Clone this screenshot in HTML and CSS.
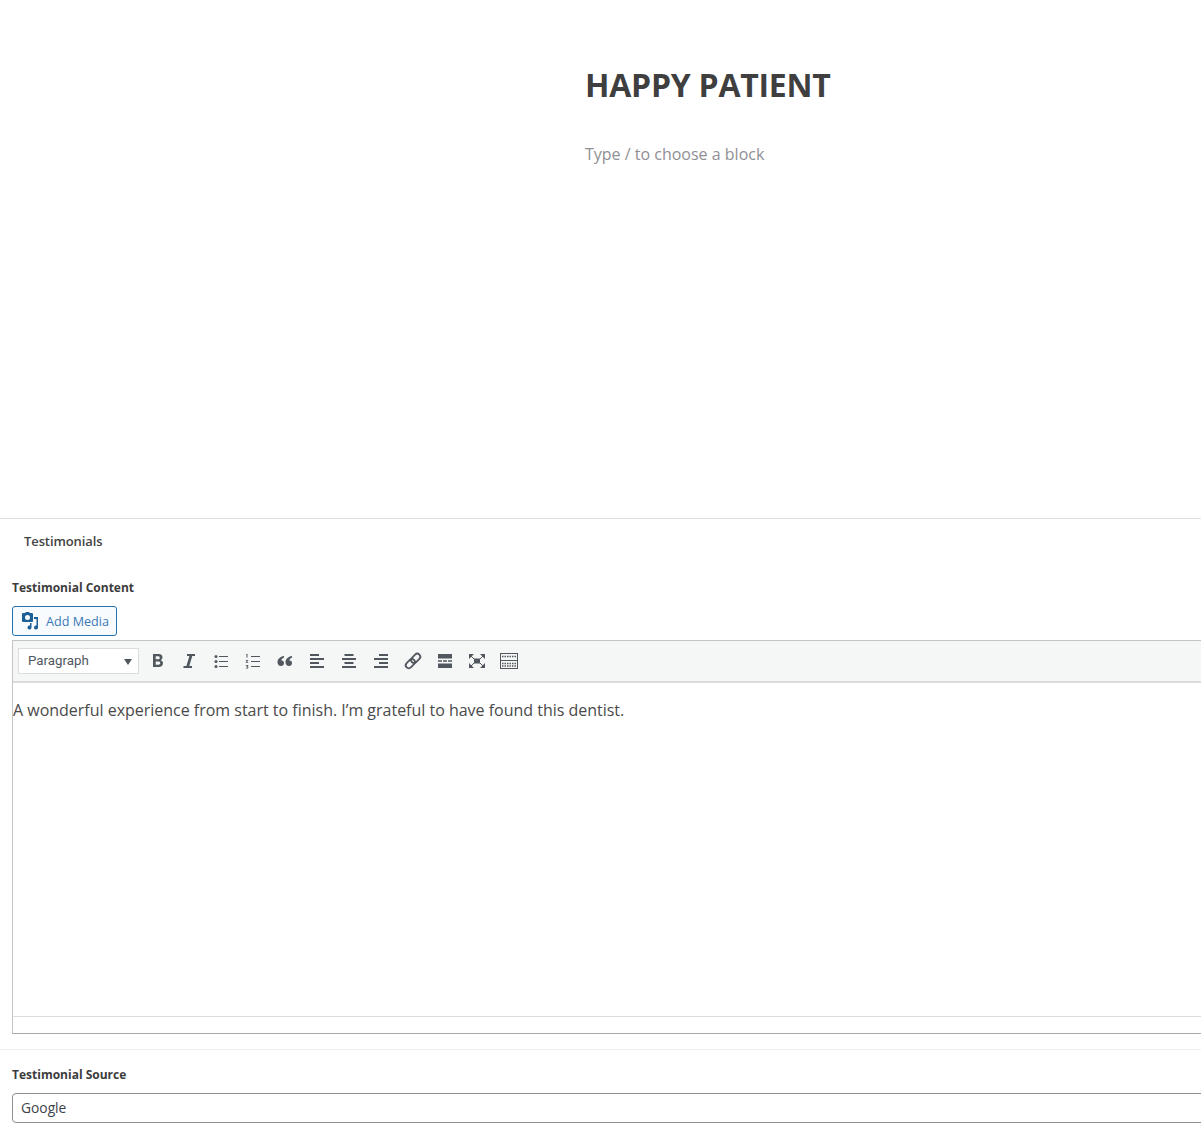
FILE: index.html
```html
<!DOCTYPE html>
<html lang="en">
<head>
    <meta charset="UTF-8">
    <title>Edit Testimonial</title>
    <link rel="stylesheet" href="styles.css">
</head>
<body>
    <div class="editor-canvas">
        <h1 class="post-title">HAPPY PATIENT</h1>
        <p class="block-hint">Type / to choose a block</p>
    </div>

    <div class="metabox">
        <h2 class="metabox-title">Testimonials</h2>

        <div class="field field-content">
            <label class="field-label">Testimonial Content</label>
            <button class="media-btn">
                <svg class="media-icon" width="18" height="18" viewBox="0 0 18 18">
                    <path fill="#1d5f97" fill-rule="evenodd" d="M2 1h2l1-1h3l1 1h2a1 1 0 0 1 1 1v7a1 1 0 0 1-1 1H2a1 1 0 0 1-1-1V2a1 1 0 0 1 1-1zm4.500 2a2.500 2.500 0 1 0 0 5 2.500 2.500 0 0 0 0-5z"/>
                    <path fill="#1d5f97" d="M13 5h4v10.500a2 2 0 1 1-1.500-1.900V7h-2.500zM10.500 11v4.500a2 2 0 1 1-1.500-1.900V11z"/>
                </svg>
                Add Media
            </button>

            <div class="wp-editor">
                <div class="toolbar">
                    <div class="format-select">Paragraph<span class="caret"></span></div>
                    <button class="tool"><svg viewBox="0 0 20 20"><path fill-rule="evenodd" d="M6 3h5.500c2.500 0 4 1.200 4 3.300 0 1.400-.7 2.400-1.900 2.900 1.500.4 2.400 1.500 2.400 3.100 0 2.400-1.700 3.700-4.500 3.700H6zm2.700 2.200v3.100h2.300c1.200 0 1.800-.5 1.800-1.600 0-1-.6-1.500-1.800-1.500zm0 5.200v3.400h2.600c1.300 0 2-.6 2-1.700s-.7-1.700-2-1.700z"/></svg></button>
                    <button class="tool"><svg viewBox="0 0 20 20"><path d="M8 3h8v2h-2.700l-3 10H13v2H4.500v-2h2.900l3-10H8z"/></svg></button>
                    <button class="tool"><svg viewBox="0 0 20 20"><circle cx="5" cy="5.500" r="1.500"/><circle cx="5" cy="10.500" r="1.500"/><circle cx="5" cy="15.500" r="1.500"/><path d="M8 5h9v1H8zM8 10h9v1H8zM8 15h9v1H8z"/></svg></button>
                    <button class="tool"><svg viewBox="0 0 20 20"><path d="M3.500 3h1v3.500h-1V4H3zM2.800 9h2.400v.8L3.900 11h1.300v.8H2.800V11l1.400-1.200H2.800zM2.800 14h2.400v3.500H2.800v-.7h1.500v-.7H3.200v-.6h1.100v-.7H2.800z"/><path d="M8 5h9v1H8zM8 10h9v1H8zM8 15h9v1H8z"/></svg></button>
                    <button class="tool"><svg viewBox="0 0 20 20"><path d="M9 5v1.500C7.300 7.300 6.500 8.300 6.300 9.500 8 9.300 9 10.300 9 12c0 1.700-1.200 3-3 3-2 0-3.500-1.500-3.500-4C2.500 8 5 5.700 9 5zM17 5v1.500c-1.700.8-2.500 1.800-2.700 3 1.700-.2 2.700.8 2.700 2.500 0 1.700-1.200 3-3 3-2 0-3.500-1.500-3.500-4 0-3 2.500-5.300 6.500-6z"/></svg></button>
                    <button class="tool"><svg viewBox="0 0 20 20"><path d="M3 3h9v2H3zM3 7h14v2H3zM3 11h9v2H3zM3 15h14v2H3z"/></svg></button>
                    <button class="tool"><svg viewBox="0 0 20 20"><path d="M5.500 3h9v2h-9zM3 7h14v2H3zM5.500 11h9v2h-9zM3 15h14v2H3z"/></svg></button>
                    <button class="tool"><svg viewBox="0 0 20 20"><path d="M8 3h9v2H8zM3 7h14v2H3zM8 11h9v2H8zM3 15h14v2H3z"/></svg></button>
                    <button class="tool"><svg viewBox="0 0 20 20"><g fill="none" stroke="#50575e" stroke-width="1.800" transform="rotate(-45 10 10)"><rect x="1" y="7" width="10.500" height="6" rx="3"/><rect x="8.500" y="7" width="10.500" height="6" rx="3"/></g></svg></button>
                    <button class="tool"><svg viewBox="0 0 20 20"><path d="M3 3h14v4.500H3zM3 12.500h14V17H3zM3 9.200h4v1.600H3zM8 9.200h4v1.600H8zM13 9.200h4v1.600h-4z"/></svg></button>
                    <button class="tool"><svg viewBox="0 0 20 20"><path d="M2 3h5L2 8zM18 3v5l-5-5zM2 17v-5l5 5zM18 17h-5l5-5zM7 7.500h6v5H7z"/><path class="fs-line" d="M4 5l4 4M16 5l-4 4M4 15l4-4M16 15l-4-4"/></svg></button>
                    <button class="tool"><svg viewBox="0 0 20 20"><path fill-rule="evenodd" d="M1 2h18v16H1zm1 1v6h16V3zm0 7v7h16v-7z"/><path class="key-row" d="M3 5.500h14M3 12.500h14M3 15h14"/></svg></button>
                </div>
                <div class="editor-body">A wonderful experience from start to finish. I’m grateful to have found this dentist.</div>
                <div class="status-bar"></div>
            </div>
        </div>

        <div class="field field-source">
            <label class="field-label">Testimonial Source</label>
            <input class="text-input" type="text" value="Google">
        </div>
    </div>
</body>
</html>
```

FILE: styles.css
```css
html, body {
    margin: 0;
    padding: 0;
    overflow: hidden;
}

body {
    width: 1240px;
    height: 1138px;
    background: #fff;
    font-family: "Open Sans", "Noto Sans", sans-serif;
    color: #3c434a;
}

.editor-canvas {
    height: 518px;
    padding-left: 585px;
    box-sizing: border-box;
    overflow: hidden;
}

.post-title {
    margin: 63px 0 0;
    font-size: 32px;
    line-height: 43px;
    font-weight: 700;
    letter-spacing: -0.25px;
    color: #3f3f3f;
}

.block-hint {
    margin: 37px 0 0;
    font-size: 16px;
    line-height: 22px;
    color: #8f8f94;
}

.metabox {
    border-top: 1px solid #e0e0e0;
}

.metabox-title {
    margin: 0;
    padding: 13px 24px 0;
    font-size: 13px;
    line-height: 18px;
    font-weight: 600;
    letter-spacing: -0.1px;
    color: #444;
}

.field {
    padding: 0 0 0 12px;
}

.field-content {
    padding-top: 29px;
    padding-bottom: 15px;
    border-bottom: 1px solid #eee;
}

.field-label {
    display: block;
    font-size: 12px;
    line-height: 18px;
    font-weight: 700;
    color: #3c3c3c;
}

.media-btn {
    display: flex;
    align-items: center;
    gap: 7px;
    height: 30px;
    width: 105px;
    margin-top: 9px;
    padding: 0 0 0 8px;
    box-sizing: border-box;
    background: #f8fbfd;
    border: 1px solid #2271b1;
    border-radius: 3px;
    font-family: inherit;
    font-size: 12.6px;
    color: #3a78b8;
}

.wp-editor {
    margin-top: 4px;
    height: 394px;
    box-sizing: border-box;
    border: 1px solid #c3c4c7;
    border-bottom-color: #a7aaad;
    border-right: 0;
    display: flex;
    flex-direction: column;
}

.toolbar {
    display: flex;
    align-items: center;
    height: 40px;
    padding-left: 5px;
    background: #f5f6f6;
    border-bottom: 2px solid #dcdcde;
    flex: none;
}

.format-select {
    position: relative;
    width: 121px;
    height: 26px;
    box-sizing: border-box;
    margin-right: 2px;
    padding-left: 9px;
    background: #fff;
    border: 1px solid #dcdcde;
    font-family: "Roboto", "Liberation Sans", sans-serif;
    font-size: 13.3px;
    line-height: 23px;
    color: #50575e;
}

.caret {
    position: absolute;
    right: 6px;
    top: 10px;
    border: 4px solid transparent;
    border-top: 6px solid #50575e;
    border-bottom: 0;
}

.tool {
    width: 32px;
    height: 30px;
    padding: 0 6px;
    box-sizing: border-box;
    background: none;
    border: 0;
    display: flex;
    align-items: center;
    justify-content: center;
}

.tool svg {
    width: 20px;
    height: 20px;
    fill: #50575e;
    flex: none;
}

.tool .key-row {
    fill: none;
    stroke: #50575e;
    stroke-width: 1.5;
    stroke-dasharray: 1.5 1;
}

.tool .fs-line {
    fill: none;
    stroke: #50575e;
    stroke-width: 1;
}

.editor-body {
    flex: 1;
    padding-top: 16px;
    font-size: 16px;
    line-height: 22px;
    letter-spacing: -0.012px;
    color: #4a4a4a;
}

.status-bar {
    height: 16px;
    border-top: 1px solid #dcdcde;
    flex: none;
}

.field-source {
    padding-top: 16px;
}

.text-input {
    display: block;
    width: 100%;
    height: 30px;
    margin-top: 9px;
    padding: 0 8px 2px;
    box-sizing: border-box;
    border: 1px solid #8c8f94;
    border-radius: 4px;
    font-family: inherit;
    font-size: 13.8px;
    color: #3c434a;
}
```
